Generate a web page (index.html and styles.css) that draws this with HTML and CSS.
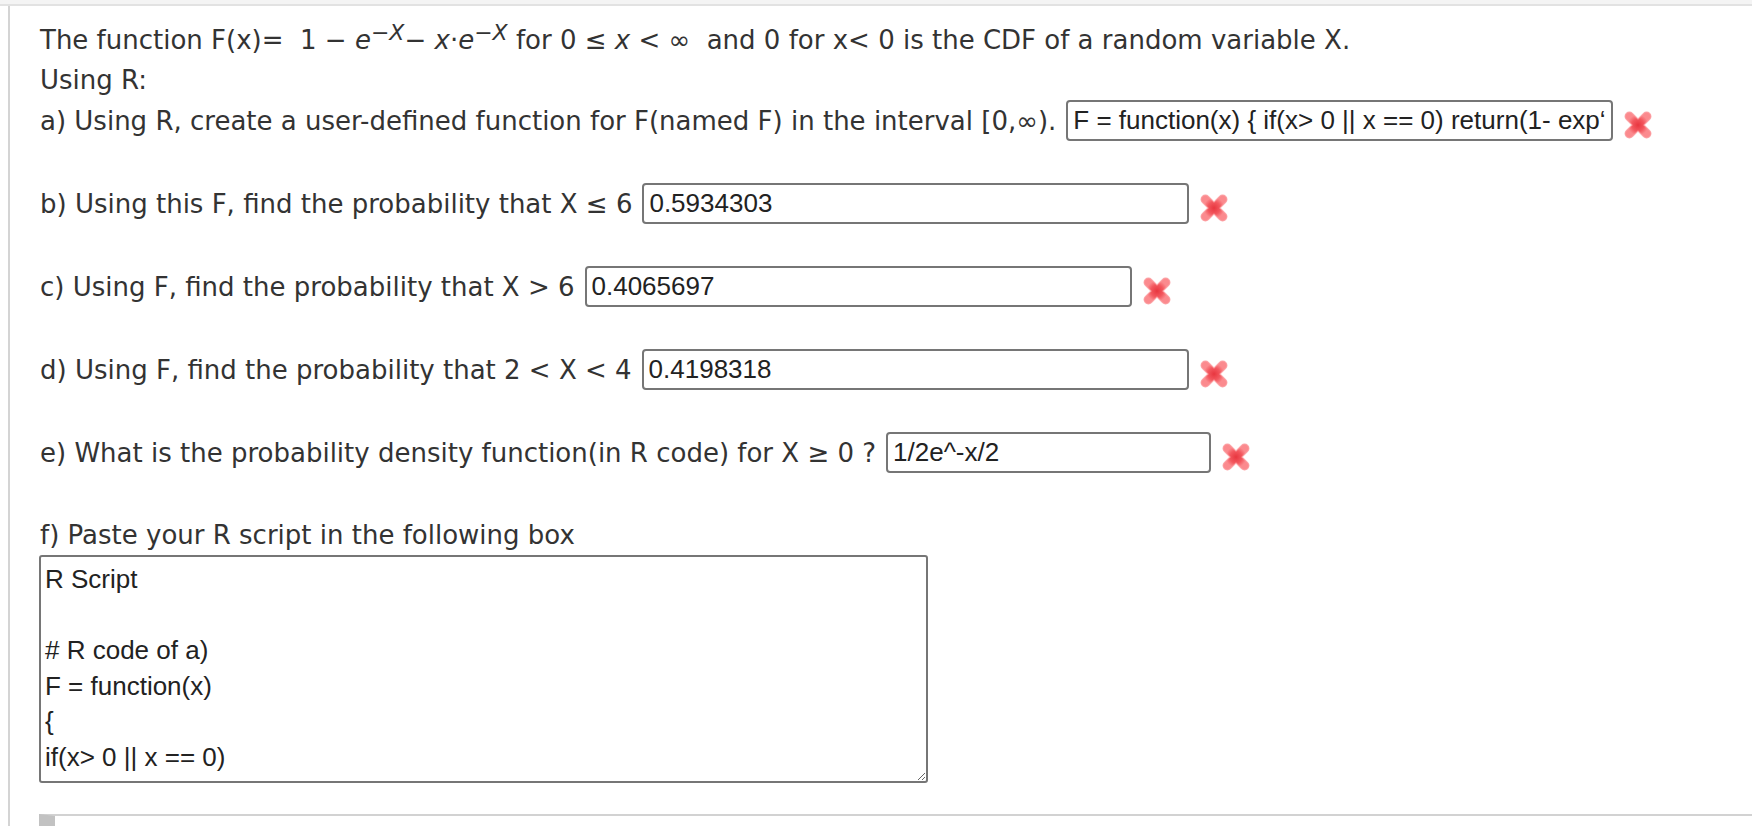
FILE: index.html
```html
<!DOCTYPE html>
<html>
<head>
<meta charset="utf-8">
<link rel="stylesheet" href="styles.css">
</head>
<body>
<div class="topbar"></div>
<div class="frame">
  <div class="line">The function F(x)= &nbsp;1 − <i>e</i><sup><i>−X</i></sup>− <i>x</i>·<i>e</i><sup><i>−X</i></sup> for 0 ≤ <i>x</i> &lt; ∞ &nbsp;and 0 for x&lt; 0 is the CDF of a random variable X.</div>
  <div class="line">Using R:</div>
  <div class="row">
    <span>a) Using R, create a user-defined function for F(named F) in the interval [0,∞).</span>
    <input class="ans wide" type="text" value="F = function(x) { if(x&gt; 0 || x == 0) return(1- exp‘-x) - x*exp(-x)) else return(0) }">
    <svg class="bad" viewBox="0 0 26 26"><use href="#cross"/></svg>
  </div>
  <div class="row">
    <span>b) Using this F, find the probability that X ≤ 6</span>
    <input class="ans wide" type="text" value="0.5934303">
    <svg class="bad" viewBox="0 0 26 26"><use href="#cross"/></svg>
  </div>
  <div class="row">
    <span>c) Using F, find the probability that X &gt; 6</span>
    <input class="ans wide" type="text" value="0.4065697">
    <svg class="bad" viewBox="0 0 26 26"><use href="#cross"/></svg>
  </div>
  <div class="row">
    <span>d) Using F, find the probability that 2 &lt; X &lt; 4</span>
    <input class="ans wide" type="text" value="0.4198318">
    <svg class="bad" viewBox="0 0 26 26"><use href="#cross"/></svg>
  </div>
  <div class="row">
    <span>e) What is the probability density function(in R code) for X ≥ 0 ?</span>
    <input class="ans narrow" type="text" value="1/2e^-x/2">
    <svg class="bad" viewBox="0 0 26 26"><use href="#cross"/></svg>
  </div>
  <div class="line">f) Paste your R script in the following box</div>
  <textarea class="script">R Script

# R code of a)
F = function(x)
{
if(x&gt; 0 || x == 0)
return(1- exp(-x) - x*exp(-x))
else
return(0)
}</textarea>
  <div class="nextbox"></div>
</div>
<svg width="0" height="0" class="defs">
  <defs>
    <radialGradient id="rg" cx="50%" cy="50%" r="60%">
      <stop offset="0" stop-color="#e8363f"/>
      <stop offset="0.6" stop-color="#f3585f"/>
      <stop offset="1" stop-color="#fb8a8e"/>
    </radialGradient>
    <g id="cross">
      <path d="M5 5 L21 21 M21 5 L5 21" stroke="#fca3a6" stroke-width="9" stroke-linecap="round" fill="none"/>
      <path d="M5 5 L21 21 M21 5 L5 21" stroke="url(#rg)" stroke-width="7" stroke-linecap="round" fill="none"/>
    </g>
  </defs>
</svg>
</body>
</html>
```
FILE: styles.css
```css
html, body {
  margin: 0;
  padding: 0;
  background: #ffffff;
}
body {
  font-family: "DejaVu Sans", Verdana, sans-serif;
  font-size: 26px;
  color: #333333;
  overflow: hidden;
}
.topbar {
  height: 4px;
  background: #f4f4f4;
  border-bottom: 2px solid #e2e2e2;
}
.frame {
  margin-left: 8px;
  border-left: 2px solid #d4d4d4;
  padding: 14px 0 0 30px;
  height: 900px;
}
.line {
  height: 40px;
  line-height: 40px;
  white-space: nowrap;
}
.line sup {
  font-size: 22px;
  line-height: 0;
  vertical-align: 9px;
}
.row {
  display: flex;
  align-items: center;
  height: 41px;
  margin-bottom: 42px;
  white-space: nowrap;
}
.ans {
  box-sizing: border-box;
  height: 41px;
  margin: 0 0 0 10px;
  padding: 0 5px;
  border: 2px solid #767676;
  border-radius: 4px;
  font-family: "Liberation Sans", Arial, sans-serif;
  font-size: 26px;
  color: #222222;
  background: #ffffff;
  outline: none;
}
.wide { width: 547px; }
.narrow { width: 325px; }
.bad {
  width: 28px;
  height: 28px;
  margin: 8px 0 0 11px;
  flex: none;
}
.defs {
  position: absolute;
}
.script {
  display: block;
  box-sizing: border-box;
  width: 889px;
  height: 228px;
  margin: 0 0 0 -1px;
  padding: 5px 4px;
  border: 2px solid #767676;
  border-radius: 3px;
  font-family: "Liberation Sans", Arial, sans-serif;
  font-size: 26px;
  line-height: 35.5px;
  color: #222222;
  overflow: hidden;
  resize: both;
}
.nextbox {
  margin: 31px 0 0 -1px;
  height: 40px;
  border-top: 2px solid #d2d2d2;
  border-left: 16px solid #c2c2c2;
}
```
